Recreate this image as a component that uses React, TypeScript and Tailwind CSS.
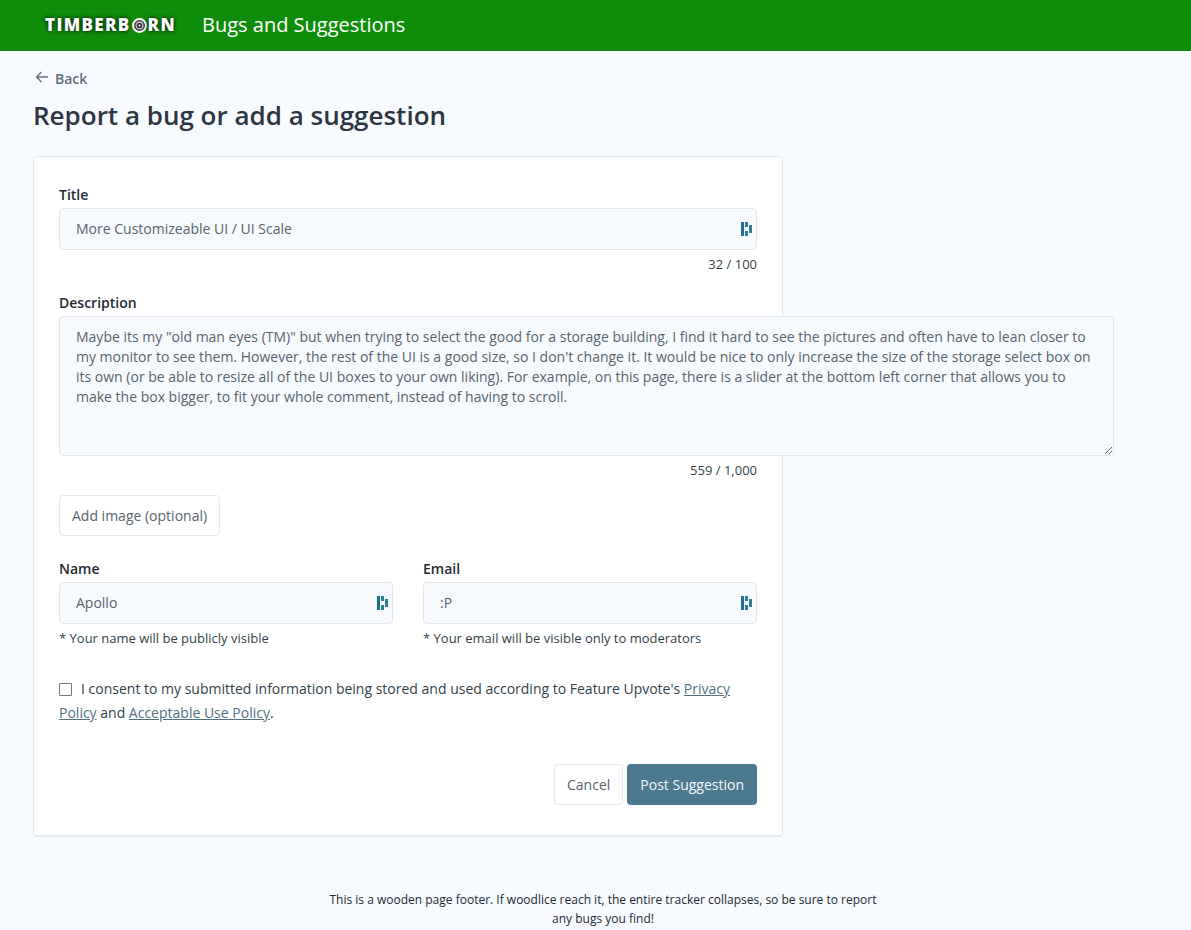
import React from "react";

function Grip() {
  return (
    <svg width="11" height="14" viewBox="0 0 11 14" className="absolute right-[5px] top-1/2 -translate-y-1/2" aria-hidden="true">
      <rect x="0" y="0" width="3" height="14" fill="#1f7186" />
      <rect x="4" y="0" width="3" height="5" fill="#2a7f92" />
      <rect x="4" y="9" width="3" height="5" fill="#2a7f92" />
      <rect x="8" y="3" width="3" height="8" fill="#2a7f92" />
    </svg>
  );
}

function Field({ label, value, note }: { label: string; value: string; note?: string }) {
  return (
    <div className="flex-1 min-w-0">
      <label className="block text-[14px] leading-[20px] font-semibold text-[#1f2933] mb-[3px]">{label}</label>
      <div className="relative">
        <input
          readOnly
          value={value}
          className="block w-full h-[42px] px-4 pb-[2px] bg-[#f6fafd] border border-[#e1e7ec] rounded-[4px] text-[14px] text-[#59636e] outline-none"
        />
        <Grip />
      </div>
      {note && <p className="mt-[5px] text-[13px] leading-[18px] text-[#323f4b]">{note}</p>}
    </div>
  );
}

export default function App() {
  return (
    <div className="min-h-[930px] h-[930px] overflow-hidden bg-[#f7fafe] font-['Open_Sans',sans-serif]">
      <header className="h-[51px] bg-[#0f8c0a] flex items-center pl-[45px]">
        <div className="flex items-center text-[17px] font-extrabold tracking-[1.35px] text-white [text-shadow:0_0_4px_#000] w-[157px] -mt-[1px]">
          TIMBERB
          <svg width="15" height="15" viewBox="0 0 14 14" className="mx-[1px]" aria-hidden="true">
            <circle cx="7" cy="7" r="6" fill="#333" stroke="#fff" strokeWidth="1.8" />
            <circle cx="7" cy="7" r="3.2" fill="none" stroke="#ddd" strokeWidth="1.1" />
            <circle cx="7" cy="7" r="1" fill="#fff" />
          </svg>
          RN
        </div>
        <h2 className="text-[20px] text-white leading-[28px] -mt-[2px]">Bugs and Suggestions</h2>
      </header>

      <main className="px-[33px]">
        <a className="flex items-center gap-[5px] h-[20px] mt-[17px] text-[14px] font-semibold text-[#616e7c]">
          <svg width="16" height="16" viewBox="0 0 16 16" fill="none" stroke="#616e7c" strokeWidth="1.3" className="ml-px -mt-[3px]" aria-hidden="true">
            <path d="M14 8H2.5M7.5 3 2.5 8l5 5" />
          </svg>
          Back
        </a>
        <h1 className="mt-[9px] text-[26px] leading-[36px] font-semibold text-[#2d3640]">Report a bug or add a suggestion</h1>

        <section className="mt-[23px] w-[750px] h-[680px] bg-white border border-[#e4e9ee] rounded-[4px] shadow-[0_1px_2px_rgba(0,0,0,0.06)] px-[25px] pt-[28px]">
          <Field label="Title" value="More Customizeable UI / UI Scale" />
          <p className="mt-[5px] text-right text-[13px] leading-[18px] text-[#323f4b]">32 / 100</p>

          <label className="block mt-[20px] mb-[3px] text-[14px] leading-[20px] font-semibold text-[#1f2933]">Description</label>
          <textarea
            readOnly
            value={`Maybe its my "old man eyes (TM)" but when trying to select the good for a storage building, I find it hard to see the pictures and often have to lean closer to my monitor to see them. However, the rest of the UI is a good size, so I don't change it. It would be nice to only increase the size of the storage select box on its own (or be able to resize all of the UI boxes to your own liking). For example, on this page, there is a slider at the bottom left corner that allows you to make the box bigger, to fit your whole comment, instead of having to scroll.`}
            className="block w-[1055px] h-[140px] px-4 py-[10px] bg-[#f6fafd] border border-[#e1e7ec] rounded-[4px] text-[14px] leading-[20px] text-[#59636e] outline-none"
          />
          <p className="mt-[5px] text-right text-[13px] leading-[18px] text-[#323f4b]">559 / 1,000</p>

          <button className="block mt-[16px] h-[41px] px-[12px] bg-white border border-[#e4e9ee] rounded-[4px] text-[14px] text-[#59636e]">
            Add image (optional)
          </button>

          <div className="flex gap-[30px] mt-[23px]">
            <Field label="Name" value="Apollo" note="* Your name will be publicly visible" />
            <Field label="Email" value=":P" note="* Your email will be visible only to moderators" />
          </div>

          <p className="mt-[30px] text-[14px] leading-[24px] text-[#323f4b]">
            <span className="inline-block align-[-2px] w-[13px] h-[13px] border border-[#767676] rounded-[1px] bg-white mr-[9px]" />
            I consent to my submitted information being stored and used according to Feature Upvote's{" "}
            <a className="underline text-[#52727f]">Privacy Policy</a> and{" "}
            <a className="underline text-[#52727f]">Acceptable Use Policy</a>.
          </p>

          <div className="flex justify-end gap-[4px] mt-[39px]">
            <button className="h-[41px] px-[12px] bg-white border border-[#e4e9ee] rounded-[4px] text-[14px] text-[#59636e]">Cancel</button>
            <button className="h-[41px] px-[13px] bg-[#4b7a90] rounded-[4px] text-[14px] text-[#f5f9fc]">Post Suggestion</button>
          </div>
        </section>

        <footer className="mt-[54px] ml-[290px] w-[560px] text-center text-[12px] leading-[19px] text-[#1f2933]">
          This is a wooden page footer. If woodlice reach it, the entire tracker collapses, so be sure to report any bugs you find!
        </footer>
      </main>
    </div>
  );
}
